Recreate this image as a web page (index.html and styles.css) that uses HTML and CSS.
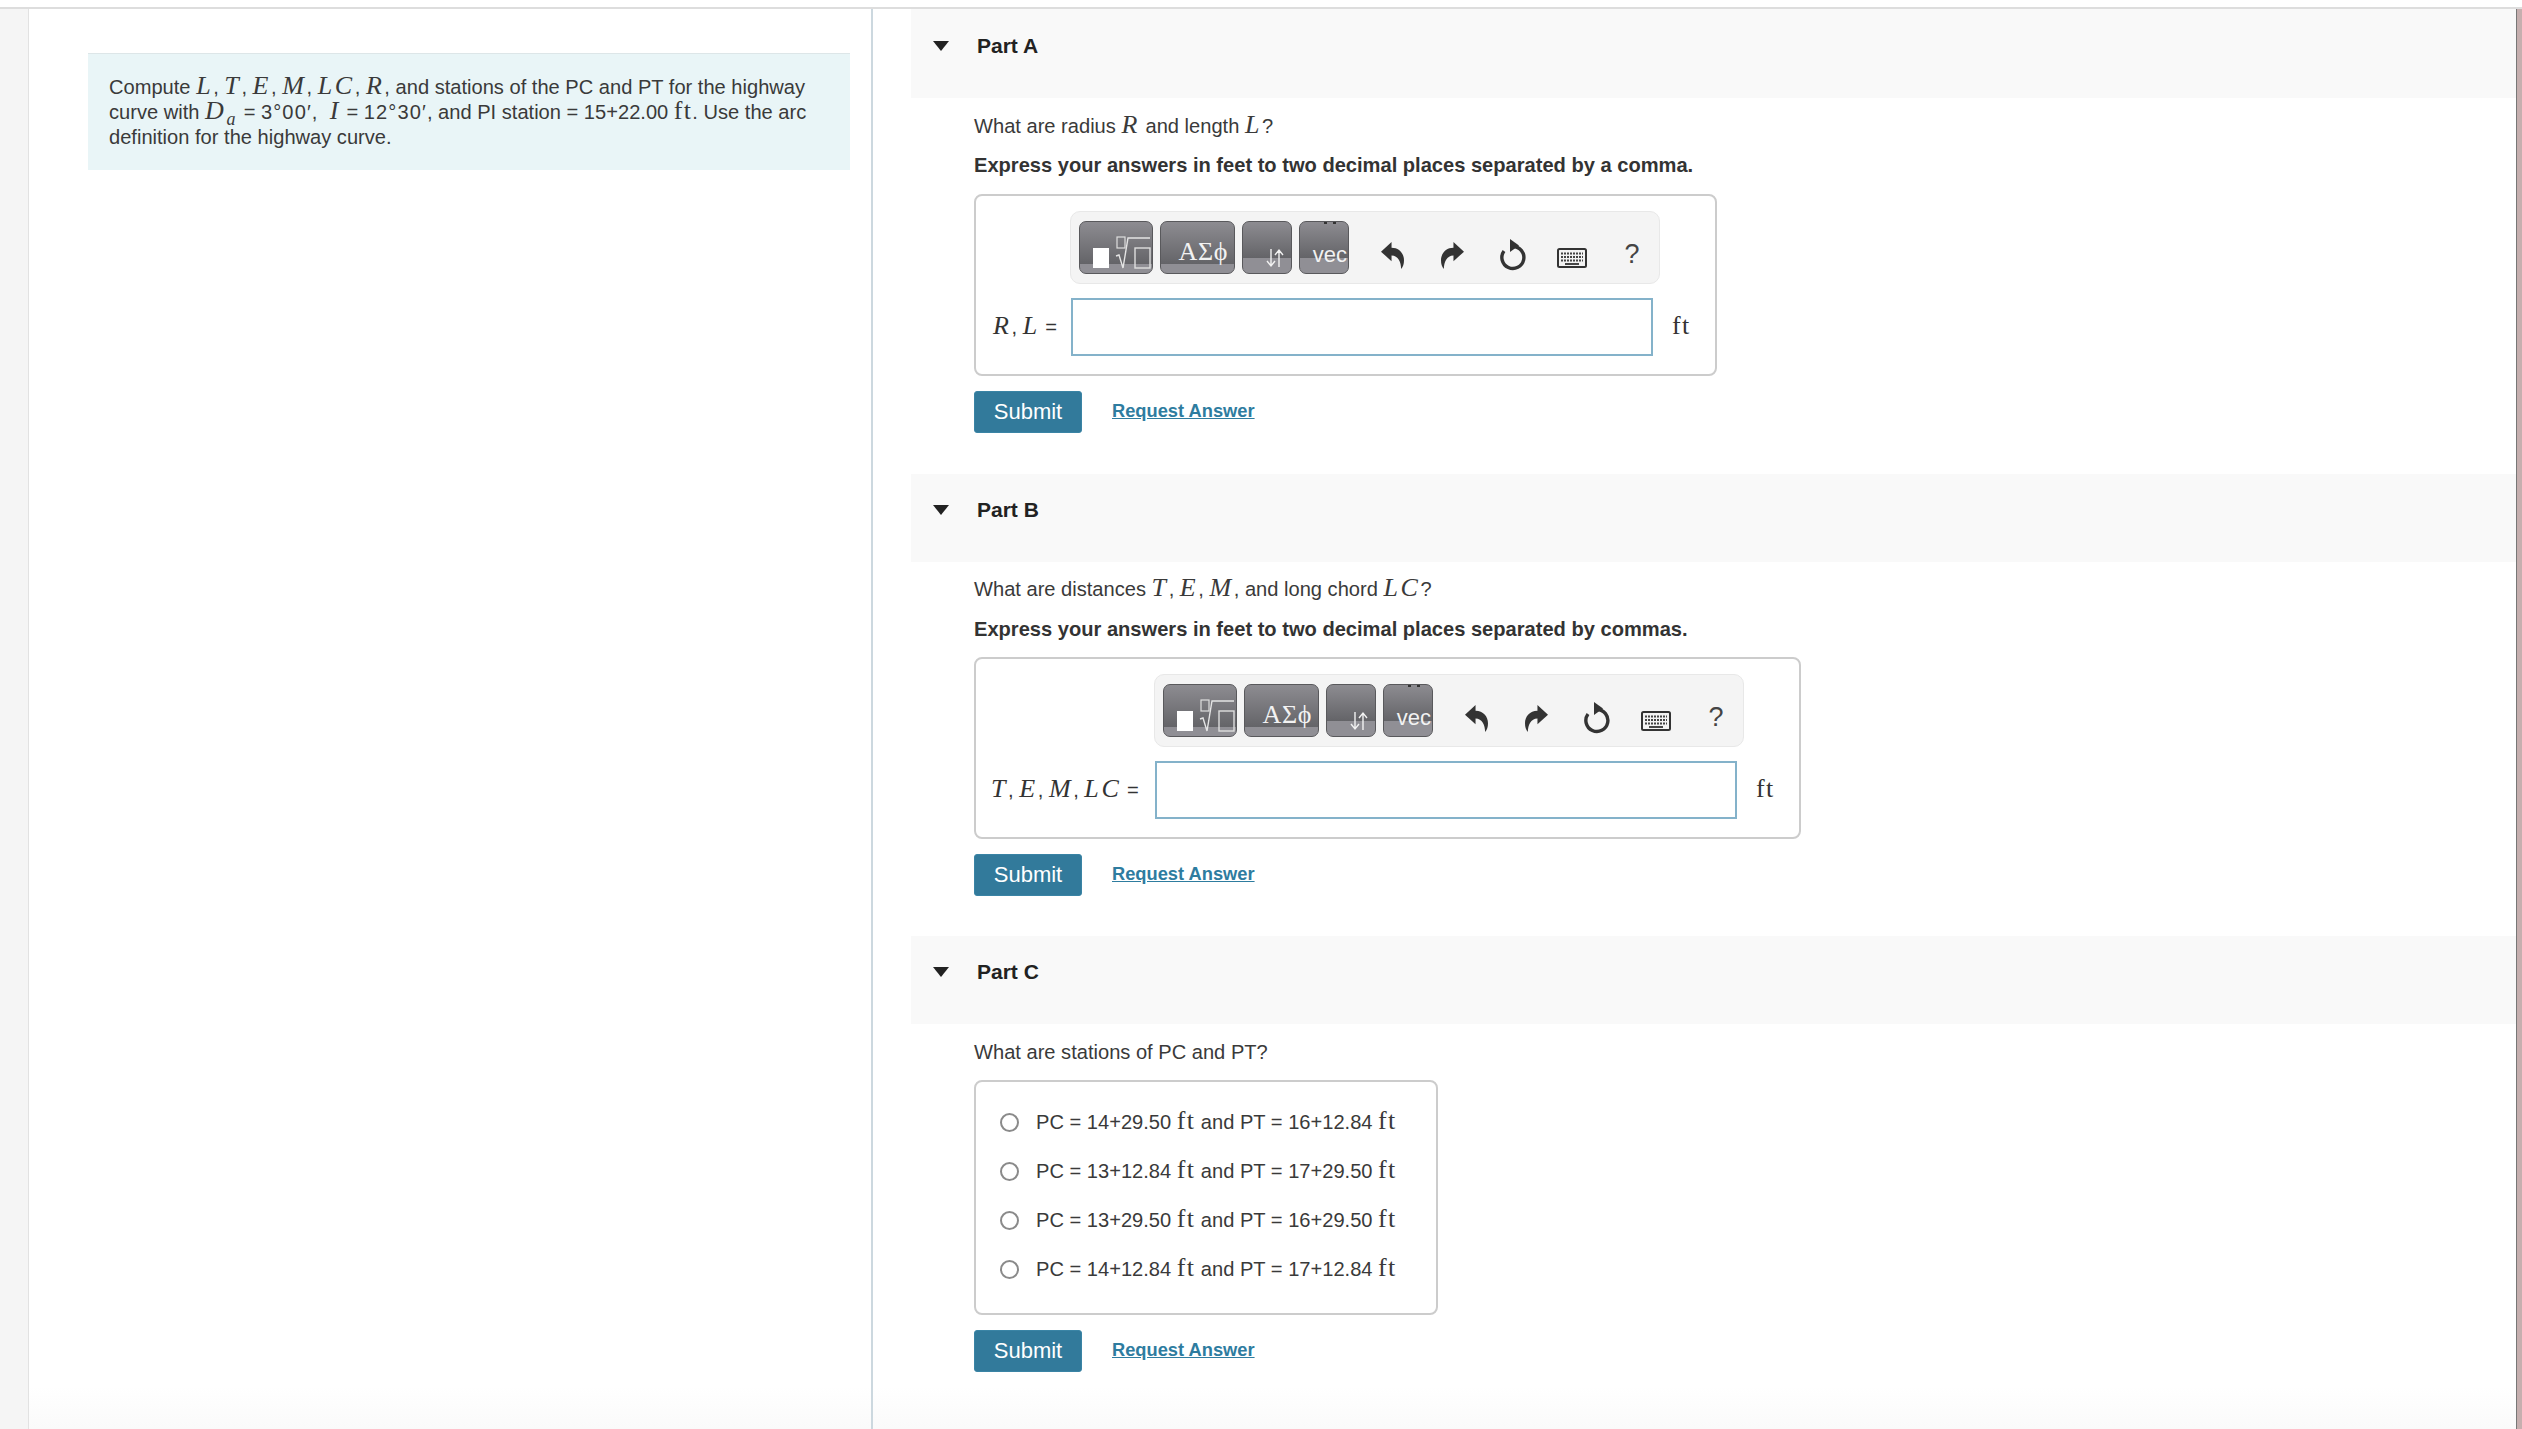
FILE: index.html
```html
<!DOCTYPE html>
<html lang="en">
<head>
    <meta charset="UTF-8">
    <title>Highway curve</title>
    <link rel="stylesheet" href="styles.css">
</head>
<body>
    <svg class="defs" width="0" height="0">
        <symbol id="i-template" viewBox="0 0 75 53">
            <rect x="15" y="27" width="16" height="20" fill="#fff"/>
            <rect x="39" y="16" width="8" height="11" fill="none" stroke="#dedede" stroke-width="1.2"/>
            <path d="M38 35l3-1 4 13 5-30h22" fill="none" stroke="#e4e4e4" stroke-width="1.4"/>
            <rect x="57" y="27" width="15" height="20" fill="none" stroke="#dedede" stroke-width="1.4"/>
        </symbol>
        <symbol id="i-arrows" viewBox="0 0 20 20">
            <path d="M6 1v17M2 13l4 5 4-5M14 19V2M10 7l4-5 4 5" fill="none" stroke="#f2f2f2" stroke-width="1.4"/>
        </symbol>
        <symbol id="i-undo" viewBox="0 0 24 28">
            <path d="M0 10L11 0v6c8 0 13 6 13 13 0 4-1 7-3 9 0-7-3-14-10-14v6z" fill="#333"/>
        </symbol>
        <symbol id="i-redo" viewBox="0 0 24 28">
            <path d="M24 10L13 0v6C5 6 0 12 0 19c0 4 1 7 3 9 0-7 3-14 10-14v6z" fill="#333"/>
        </symbol>
        <symbol id="i-reset" viewBox="0 0 28 32">
            <path d="M15 7.500a11 11 0 1 1-9 4.500" fill="none" stroke="#333" stroke-width="3.400"/>
            <path d="M12 0l9 6.500-9 6.500z" fill="#333"/>
        </symbol>
        <symbol id="i-keyboard" viewBox="0 0 30 20">
            <rect x="1" y="1" width="28" height="18" rx="1.500" fill="#f3f3f3" stroke="#333" stroke-width="2"/>
            <path d="M4 5.500h22M4 9h22M4 12.500h22" stroke="#444" stroke-width="1.800" stroke-dasharray="2 1"/>
            <path d="M8 16h14" stroke="#333" stroke-width="1.800"/>
        </symbol>
    </svg>

    <div class="top-strip"></div>
    <div class="page">
        <div class="side-rail"></div>

        <div class="left-panel">
            <div class="intro">
                Compute <span class="m">L</span>, <span class="m">T</span>, <span class="m">E</span>, <span class="m">M</span>, <span class="m">LC</span>, <span class="m">R</span>, and stations of the PC and PT for the highway<br>
                curve with <span class="m">D<sub>a</sub></span> = <span class="angle">3&deg;00&prime;,</span>&nbsp; <span class="m">I</span> = <span class="angle">12&deg;30&prime;</span>, and PI station = 15+22.00 <span class="r">ft</span>. Use the arc<br>
                definition for the highway curve.
            </div>
        </div>

        <div class="right-panel">
            <section class="part part-a">
                <h2 class="part-head"><span class="caret"></span>Part A</h2>
                <div class="part-body">
                    <p class="question">What are radius <span class="m">R</span> and length <span class="m">L</span>?</p>
                    <p class="hint">Express your answers in feet to two decimal places separated by a comma.</p>
                    <div class="answer-box box-a">
                        <div class="toolbar">
                            <span class="tbtn tbtn-wide tbtn-tpl"><svg class="tpl"><use href="#i-template"/></svg></span>
                            <span class="tbtn tbtn-wide tbtn-greek">&Alpha;&Sigma;&straightphi;</span>
                            <span class="tbtn tbtn-narrow"><svg class="arrows"><use href="#i-arrows"/></svg></span>
                            <span class="tbtn tbtn-narrow tbtn-vec">vec</span>
                            <div class="tools">
                                <span class="tool"><svg class="ic-undo"><use href="#i-undo"/></svg></span>
                                <span class="tool"><svg class="ic-undo"><use href="#i-redo"/></svg></span>
                                <span class="tool"><svg class="ic-reset"><use href="#i-reset"/></svg></span>
                                <span class="tool"><svg class="ic-kbd"><use href="#i-keyboard"/></svg></span>
                                <span class="tool tool-help">?</span>
                            </div>
                        </div>
                        <div class="answer-row">
                            <span class="answer-label"><span class="m">R</span>, <span class="m">L</span> =</span>
                            <div class="answer-input"></div>
                            <span class="r unit">ft</span>
                        </div>
                    </div>
                    <div class="actions">
                        <button class="submit">Submit</button>
                        <a class="request" href="#">Request Answer</a>
                    </div>
                </div>
            </section>

            <section class="part part-b">
                <h2 class="part-head"><span class="caret"></span>Part B</h2>
                <div class="part-body">
                    <p class="question">What are distances <span class="m">T</span>, <span class="m">E</span>, <span class="m">M</span>, and long chord <span class="m">LC</span>?</p>
                    <p class="hint">Express your answers in feet to two decimal places separated by commas.</p>
                    <div class="answer-box box-b">
                        <div class="toolbar">
                            <span class="tbtn tbtn-wide tbtn-tpl"><svg class="tpl"><use href="#i-template"/></svg></span>
                            <span class="tbtn tbtn-wide tbtn-greek">&Alpha;&Sigma;&straightphi;</span>
                            <span class="tbtn tbtn-narrow"><svg class="arrows"><use href="#i-arrows"/></svg></span>
                            <span class="tbtn tbtn-narrow tbtn-vec">vec</span>
                            <div class="tools">
                                <span class="tool"><svg class="ic-undo"><use href="#i-undo"/></svg></span>
                                <span class="tool"><svg class="ic-undo"><use href="#i-redo"/></svg></span>
                                <span class="tool"><svg class="ic-reset"><use href="#i-reset"/></svg></span>
                                <span class="tool"><svg class="ic-kbd"><use href="#i-keyboard"/></svg></span>
                                <span class="tool tool-help">?</span>
                            </div>
                        </div>
                        <div class="answer-row">
                            <span class="answer-label"><span class="m">T</span>, <span class="m">E</span>, <span class="m">M</span>, <span class="m">LC</span> =</span>
                            <div class="answer-input"></div>
                            <span class="r unit">ft</span>
                        </div>
                    </div>
                    <div class="actions">
                        <button class="submit">Submit</button>
                        <a class="request" href="#">Request Answer</a>
                    </div>
                </div>
            </section>

            <section class="part part-c">
                <h2 class="part-head"><span class="caret"></span>Part C</h2>
                <div class="part-body">
                    <p class="question">What are stations of PC and PT?</p>
                    <div class="choices">
                        <label class="choice"><input type="radio" name="stations"><span>PC = 14+29.50 <span class="r">ft</span> and PT = 16+12.84 <span class="r">ft</span></span></label>
                        <label class="choice"><input type="radio" name="stations"><span>PC = 13+12.84 <span class="r">ft</span> and PT = 17+29.50 <span class="r">ft</span></span></label>
                        <label class="choice"><input type="radio" name="stations"><span>PC = 13+29.50 <span class="r">ft</span> and PT = 16+29.50 <span class="r">ft</span></span></label>
                        <label class="choice"><input type="radio" name="stations"><span>PC = 14+12.84 <span class="r">ft</span> and PT = 17+12.84 <span class="r">ft</span></span></label>
                    </div>
                    <div class="actions">
                        <button class="submit">Submit</button>
                        <a class="request" href="#">Request Answer</a>
                    </div>
                </div>
            </section>
        </div>

        <div class="edge"></div>
    </div>
</body>
</html>
```

FILE: styles.css
```css
html, body {
    height: 100%;
}
body {
    margin: 0;
    display: flex;
    flex-direction: column;
    overflow: hidden;
    font-family: "Liberation Sans", Arial, sans-serif;
    font-size: 20.100px;
    line-height: 25px;
    color: #333;
    background-color: #fff;
}
.defs {
    display: block;
    height: 0;
}
.top-strip {
    height: 7px;
    flex: none;
    border-bottom: 2px solid #ddd;
}
.page {
    flex: 1;
    display: flex;
    background: linear-gradient(#fff 97%, #fafafa);
}
.side-rail {
    width: 28px;
    flex: none;
    background-color: #f5f5f5;
    border-right: 1px solid #e2e2e2;
}
.left-panel {
    width: 842px;
    flex: none;
    border-right: 2px solid #ccd8df;
}
.intro {
    margin: 44px 0 0 59px;
    width: 720px;
    padding: 21px 21px 20px;
    background-color: #e9f5f7;
    border-top: 1px solid #dde6e8;
    color: #3a3a3a;
    white-space: nowrap;
}
.m {
    font-family: "Liberation Serif", "Times New Roman", serif;
    font-style: italic;
    font-size: 26px;
    letter-spacing: 2.600px;
    line-height: 0;
}
.m sub {
    font-size: 18px;
    line-height: 0;
}
.angle {
    letter-spacing: 1.100px;
}
.r {
    font-family: "Liberation Serif", "Times New Roman", serif;
    font-size: 26px;
    letter-spacing: 1.300px;
    line-height: 0;
}
.right-panel {
    flex: 1;
    padding-left: 38px;
    min-width: 0;
}
.part-head {
    display: flex;
    align-items: flex-start;
    height: 88px;
    margin: 0;
    padding: 23px 0 0 22px;
    box-sizing: border-box;
    background-color: #f9f9f9;
    font-size: 21px;
    line-height: 25px;
    font-weight: bold;
    color: #222;
}
.part-a .part-head {
    height: 89px;
    padding-top: 24px;
}
.part-b {
    margin-top: 41px;
}
.part-c {
    margin-top: 40px;
}
.caret {
    width: 0;
    height: 0;
    margin: 8px 28px 0 0;
    border-left: 8.500px solid transparent;
    border-right: 8.500px solid transparent;
    border-top: 10px solid #222;
}
.part-body {
    padding: 16px 0 0 63px;
}
.part-b .part-body {
    padding-top: 15px;
}
.question {
    margin: 0 0 14px;
    color: #3a3a3a;
}
.part-b .question {
    margin-bottom: 15px;
}
.hint {
    margin: 0 0 16px;
    font-weight: bold;
    color: #333;
}
.part-b .hint {
    margin-bottom: 15px;
}
.answer-box {
    box-sizing: border-box;
    height: 182px;
    border: 2px solid #ccc;
    border-radius: 8px;
    padding: 15px 0 0;
}
.box-a {
    width: 743px;
}
.box-b {
    width: 827px;
}
.box-a .toolbar {
    margin-left: 94px;
}
.box-a .answer-input {
    margin-left: 95px;
}
.box-b .toolbar {
    margin-left: 178px;
}
.box-b .answer-input {
    margin-left: 179px;
}
.toolbar {
    box-sizing: border-box;
    display: flex;
    gap: 7px;
    width: 590px;
    height: 73px;
    padding: 9px 8px;
    background-color: #f4f4f4;
    border: 1px solid #e8e8e8;
    border-radius: 10px;
}
.tbtn {
    position: relative;
    box-sizing: border-box;
    display: flex;
    flex: none;
    align-items: flex-end;
    justify-content: flex-end;
    height: 53px;
    border: 1px solid #59595c;
    border-radius: 7px;
    color: #f2f2f2;
    overflow: hidden;
}
.tbtn-wide {
    width: 75px;
    background: linear-gradient(#8d8c91, #646468 82%, #908f95 82%);
}
.tbtn-tpl {
    width: 74px;
}
.tbtn-narrow {
    width: 50px;
    background: linear-gradient(#8d8c91, #646468 70%, #908f95 70%);
}
.tpl {
    width: 75px;
    height: 53px;
    flex: none;
    margin-right: -1px;
    margin-bottom: -1px;
}
.tbtn-greek {
    padding: 0 6px 9px 0;
    font-family: "Liberation Serif", "Times New Roman", serif;
    font-size: 26px;
    letter-spacing: 0.600px;
    line-height: 25px;
}
.arrows {
    width: 20px;
    height: 20px;
    margin: 0 6px 5px 0;
}
.tbtn-vec {
    padding: 0 1px 7px 0;
    font-size: 22px;
    line-height: 22px;
}
.tbtn-vec::before {
    content: "";
    position: absolute;
    top: 0;
    left: 24px;
    width: 3px;
    height: 2px;
    background-color: #333;
    box-shadow: 9px 0 #333;
}
.tools {
    display: flex;
    flex: none;
    width: 280px;
    margin-left: 6px;
}
.tool {
    display: flex;
    flex: none;
    align-items: center;
    justify-content: center;
    width: 60px;
    height: 53px;
    margin-top: 7px;
}
.tool-help {
    width: 40px;
    margin-left: 10px;
    font-size: 27px;
    color: #444;
}
.ic-undo {
    width: 23px;
    height: 27px;
    margin-top: 2px;
}
.ic-reset {
    width: 28px;
    height: 32px;
}
.ic-kbd {
    width: 30px;
    height: 20px;
    margin-top: 7px;
}
.answer-row {
    position: relative;
    display: flex;
    align-items: center;
    height: 58px;
    margin-top: 14px;
}
.answer-label {
    position: absolute;
    white-space: nowrap;
}
.box-a .answer-label {
    left: 17px;
}
.box-b .answer-label {
    left: 15px;
}
.answer-input {
    box-sizing: border-box;
    width: 582px;
    height: 58px;
    background-color: #fff;
    border: 2px solid #84b2ca;
}
.unit {
    margin: 0 0 2px 19px;
    color: #333;
}
.actions {
    display: flex;
    align-items: flex-start;
    margin-top: 15px;
}
.submit {
    box-sizing: border-box;
    width: 108px;
    height: 42px;
    padding: 0;
    background-color: #327a9b;
    color: #fff;
    border: 1px solid #3a84a5;
    border-radius: 3px;
    font-family: inherit;
    font-size: 22px;
}
.request {
    margin: 7px 0 0 30px;
    font-size: 18.300px;
    font-weight: bold;
    color: #2e7c9f;
    text-decoration: underline;
}
.choices {
    box-sizing: border-box;
    width: 464px;
    height: 235px;
    margin-top: 15px;
    padding: 15.500px 0 0 24px;
    border: 2px solid #ccc;
    border-radius: 8px;
}
.part-c .question {
    margin-bottom: 0;
}
.choice {
    display: flex;
    align-items: center;
    height: 49px;
    white-space: nowrap;
    color: #3a3a3a;
}
.choice input {
    appearance: none;
    flex: none;
    width: 19px;
    height: 19px;
    margin: 0 17px 0 0;
    border: 2px solid #8a8a8a;
    border-radius: 50%;
    background-color: #fff;
}
.edge {
    width: 5px;
    flex: none;
    background-color: #c6afaf;
    border-left: 1px solid #777;
}
```
